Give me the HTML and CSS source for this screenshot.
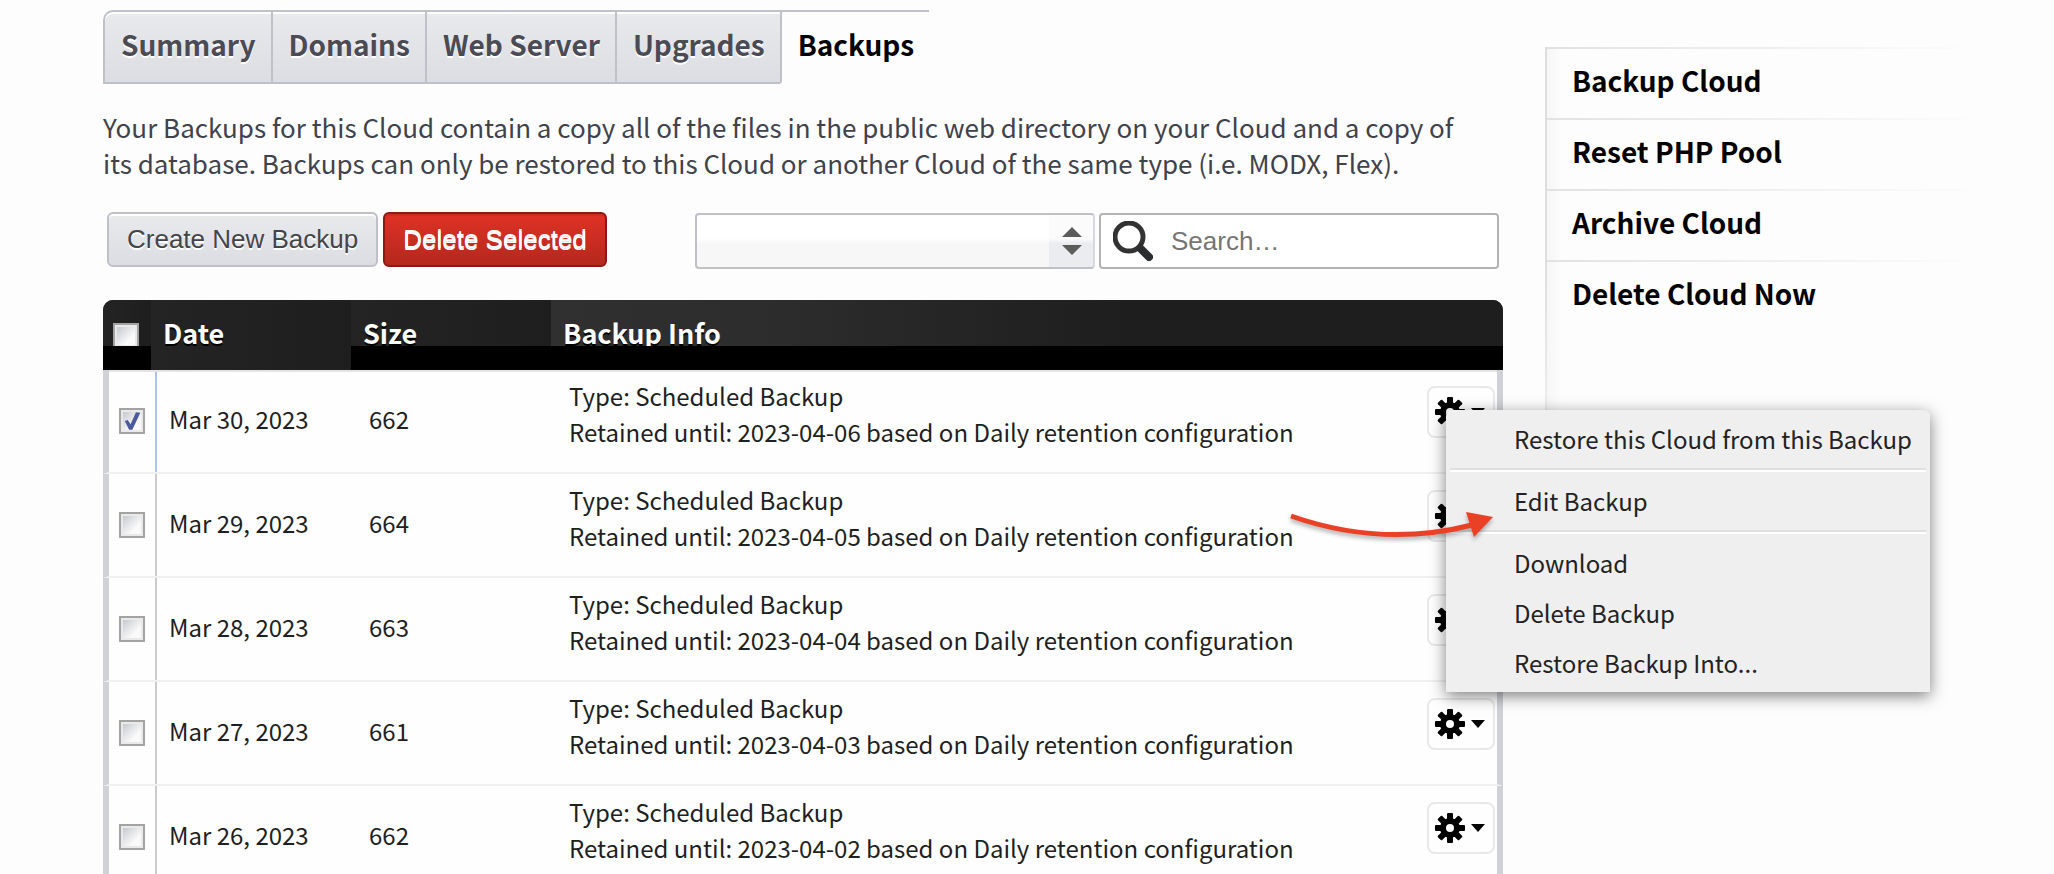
FILE: index.html
```html
<!DOCTYPE html>
<html lang="en">
<head>
    <meta charset="UTF-8">
    <meta name="viewport" content="width=device-width, initial-scale=1.0">
    <title>Backups</title>
    <link rel="stylesheet" href="styles.css">
</head>
<body>
    <!-- shared icons -->
    <svg class="icon-defs" aria-hidden="true">
        <symbol id="gear" viewBox="-15 -15 30 30">
            <g fill="#000">
                <rect x="-3" y="-15" width="6" height="30" rx="1"/>
                <rect x="-3" y="-15" width="6" height="30" rx="1" transform="rotate(45)"/>
                <rect x="-3" y="-15" width="6" height="30" rx="1" transform="rotate(90)"/>
                <rect x="-3" y="-15" width="6" height="30" rx="1" transform="rotate(135)"/>
                <circle r="10"/>
            </g>
            <circle r="4" fill="#fff"/>
        </symbol>
        <symbol id="caret" viewBox="0 0 14 8">
            <path d="M0 0h14L7 8z" fill="#000"/>
        </symbol>
    </svg>

    <div class="page">
        <main class="main">
            <nav class="tabs">
                <a href="#summary" class="tab">Summary</a>
                <a href="#domains" class="tab">Domains</a>
                <a href="#web-server" class="tab">Web Server</a>
                <a href="#upgrades" class="tab">Upgrades</a>
                <a href="#backups" class="tab active">Backups</a>
            </nav>

            <p class="intro">Your Backups for this Cloud contain a copy all of the files in the public web directory on your Cloud and a copy of its database. Backups can only be restored to this Cloud or another Cloud of the same type (i.e. MODX, Flex).</p>

            <div class="toolbar">
                <button type="button" class="button">Create New Backup</button>
                <button type="button" class="button danger">Delete Selected</button>
                <div class="filters">
                    <div class="select-box">
                        <select aria-label="Filter backups">
                            <option></option>
                        </select>
                        <svg class="select-arrows" width="20" height="28" viewBox="0 0 20 28" aria-hidden="true">
                            <path d="M10 0l10 10H0zM0 18h20L10 28z" fill="#5c5c5c"/>
                        </svg>
                    </div>
                    <label class="search-box">
                        <svg width="40" height="40" viewBox="0 0 40 40" aria-hidden="true">
                            <circle cx="16" cy="16" r="14" fill="none" stroke="#333" stroke-width="5"/>
                            <path d="M25 25l3 3" stroke="#333" stroke-width="5"/>
                            <path d="M28 28l8 8" stroke="#2b2d2e" stroke-width="8" stroke-linecap="round"/>
                        </svg>
                        <input type="text" placeholder="Search…" aria-label="Search">
                    </label>
                </div>
            </div>

            <table class="backups">
                <colgroup>
                    <col class="col-check">
                    <col class="col-date">
                    <col class="col-size">
                    <col>
                    <col class="col-actions">
                </colgroup>
                <thead>
                    <tr>
                        <th class="check"><div class="head"><input type="checkbox" class="checkbox" aria-label="Select all"></div></th>
                        <th class="date"><div class="head">Date</div></th>
                        <th class="size"><div class="head">Size</div></th>
                        <th class="info" colspan="2"><div class="head">Backup Info</div></th>
                    </tr>
                </thead>
                <tbody>
                    <tr class="selected">
                        <td class="check"><input type="checkbox" class="checkbox" checked aria-label="Select Mar 30, 2023"></td>
                        <td class="date">Mar 30, 2023</td>
                        <td class="size">662</td>
                        <td class="info">Type: Scheduled Backup<br>Retained until: 2023-04-06 based on Daily retention configuration</td>
                        <td class="actions">
                            <div class="action-wrap">
                                <button type="button" class="gear-button" aria-label="Actions"><svg class="gear"><use href="#gear"/></svg><svg class="caret"><use href="#caret"/></svg></button>
                                <div class="menu">
                                    <a href="#restore">Restore this Cloud from this Backup</a>
                                    <hr>
                                    <a href="#edit">Edit Backup</a>
                                    <hr>
                                    <a href="#download">Download</a>
                                    <a href="#delete">Delete Backup</a>
                                    <a href="#restore-into">Restore Backup Into...</a>
                                </div>
                                <svg class="arrow" width="220" height="50" viewBox="0 0 220 50" aria-hidden="true">
                                    <path d="M6 11Q97 43 187 20" fill="none" stroke="#ea4025" stroke-width="5"/>
                                    <path d="M181 7l27 5-19 20z" fill="#ea4025"/>
                                </svg>
                            </div>
                        </td>
                    </tr>
                    <tr>
                        <td class="check"><input type="checkbox" class="checkbox" aria-label="Select Mar 29, 2023"></td>
                        <td class="date">Mar 29, 2023</td>
                        <td class="size">664</td>
                        <td class="info">Type: Scheduled Backup<br>Retained until: 2023-04-05 based on Daily retention configuration</td>
                        <td class="actions"><button type="button" class="gear-button" aria-label="Actions"><svg class="gear"><use href="#gear"/></svg><svg class="caret"><use href="#caret"/></svg></button></td>
                    </tr>
                    <tr>
                        <td class="check"><input type="checkbox" class="checkbox" aria-label="Select Mar 28, 2023"></td>
                        <td class="date">Mar 28, 2023</td>
                        <td class="size">663</td>
                        <td class="info">Type: Scheduled Backup<br>Retained until: 2023-04-04 based on Daily retention configuration</td>
                        <td class="actions"><button type="button" class="gear-button" aria-label="Actions"><svg class="gear"><use href="#gear"/></svg><svg class="caret"><use href="#caret"/></svg></button></td>
                    </tr>
                    <tr>
                        <td class="check"><input type="checkbox" class="checkbox" aria-label="Select Mar 27, 2023"></td>
                        <td class="date">Mar 27, 2023</td>
                        <td class="size">661</td>
                        <td class="info">Type: Scheduled Backup<br>Retained until: 2023-04-03 based on Daily retention configuration</td>
                        <td class="actions"><button type="button" class="gear-button" aria-label="Actions"><svg class="gear"><use href="#gear"/></svg><svg class="caret"><use href="#caret"/></svg></button></td>
                    </tr>
                    <tr>
                        <td class="check"><input type="checkbox" class="checkbox" aria-label="Select Mar 26, 2023"></td>
                        <td class="date">Mar 26, 2023</td>
                        <td class="size">662</td>
                        <td class="info">Type: Scheduled Backup<br>Retained until: 2023-04-02 based on Daily retention configuration</td>
                        <td class="actions"><button type="button" class="gear-button" aria-label="Actions"><svg class="gear"><use href="#gear"/></svg><svg class="caret"><use href="#caret"/></svg></button></td>
                    </tr>
                </tbody>
            </table>
        </main>

        <aside class="sidebar">
            <a href="#backup-cloud">Backup Cloud</a>
            <a href="#reset-php">Reset PHP Pool</a>
            <a href="#archive">Archive Cloud</a>
            <a href="#delete-cloud">Delete Cloud Now</a>
        </aside>
    </div>
</body>
</html>
```
FILE: styles.css
```css
* {
    box-sizing: border-box;
}
body {
    margin: 0;
    font-family: "Noto Sans CJK SC", "Noto Sans", sans-serif;
    font-size: 24px;
    line-height: 36px;
    color: #1d1f22;
    background-color: #fdfdfd;
}
a {
    text-decoration: none;
}
.icon-defs {
    display: none;
}
.page {
    display: grid;
    grid-template-columns: minmax(0, 1fr) 440px;
    gap: 42px;
    align-items: start;
    padding: 10px 69px 0 103px;
}

/* Tabs */
.tabs {
    display: flex;
}
.tab {
    height: 74px;
    padding: 14px 15px 0 16px;
    border: 2px solid #bfc0c8;
    border-right: none;
    font-size: 28px;
    font-weight: bold;
    color: #4a4b54;
    text-shadow: 0 2px 0 #fff;
    background: linear-gradient(#e9eaec, #dcdde2);
    box-shadow: inset 0 2px 0 #fff;
}
.tab:first-child {
    border-top-left-radius: 10px;
}
.tab.active {
    color: #000;
    text-shadow: none;
    background: none;
    box-shadow: none;
    border-bottom-color: transparent;
}

.intro {
    margin: 25px 0 0;
    padding-right: 24px;
    font-size: 26px;
    color: #40424b;
}

/* Toolbar */
.toolbar {
    display: flex;
    gap: 5px;
    margin: 31px 4px 0;
}
.button {
    height: 55px;
    padding: 0 18px;
    border: 2px solid #bfc0c8;
    border-radius: 6px;
    font-family: "Liberation Sans", Arial, sans-serif;
    font-size: 26px;
    color: #44454a;
    text-shadow: 0 2px 0 #fff;
    background: linear-gradient(#e9eaec, #dcdde2);
    box-shadow: inset 0 2px 0 #fff;
    cursor: pointer;
}
.button.danger {
    color: #fff;
    border-color: #8d1a12;
    background: linear-gradient(#df3225, #b4281d);
    box-shadow: inset 0 2px 0 #cf2c20;
}
.filters {
    display: flex;
    gap: 4px;
    margin-left: auto;
}
.select-box {
    display: grid;
    width: 400px;
    margin-top: 1px;
}
.select-box select,
.select-arrows {
    grid-area: 1 / 1;
}
.select-box select {
    appearance: none;
    height: 56px;
    border: 2px solid #bfc0c8;
    border-right-color: #d8d9de;
    border-radius: 4px;
    background:
        linear-gradient(#fbfbfc 45%, #ebecef 55%) right / 44px 100% no-repeat,
        linear-gradient(#fff 45%, #f7f7f7 55%);
}
.select-arrows {
    place-self: center end;
    margin-right: 13px;
    pointer-events: none;
}
.search-box {
    display: flex;
    align-items: center;
    gap: 16px;
    width: 400px;
    height: 56px;
    margin-top: 1px;
    padding: 0 12px;
    border: 2px solid #b3b3b3;
    border-radius: 4px;
    background-color: #fff;
}
.search-box svg {
    flex: none;
}
.search-box input {
    flex: 1;
    min-width: 0;
    border: none;
    outline: none;
    background: none;
    font-family: "Liberation Sans", Arial, sans-serif;
    font-size: 26px;
}
.search-box input::placeholder {
    color: #757575;
}

/* Backups table */
.backups {
    width: 100%;
    margin-top: 31px;
    table-layout: fixed;
    border-spacing: 0;
}
.col-check {
    width: 48px;
}
.col-date,
.col-size {
    width: 200px;
}
.col-actions {
    width: 76px;
}
.backups th {
    height: 70px;
    padding: 0;
    vertical-align: top;
    text-align: left;
    font-size: 27px;
    color: #fff;
    text-shadow: 0 2px 0 #000;
    background-color: #000;
}
.head {
    height: 46px;
    padding: 15px 12px 0;
    overflow: hidden;
    background: linear-gradient(to right, #242424, #1e1e1e);
}
th.check .head {
    padding: 23px 10px 0;
    border-top-left-radius: 10px;
}
th.date .head {
    height: 70px;
}
th.info .head {
    border-top-right-radius: 10px;
    background: linear-gradient(to right, #303030, #2c2c2c 25%, #1e1e1e 60%);
}
.backups th:first-child {
    border-top-left-radius: 10px;
}
.backups th:last-child {
    border-top-right-radius: 10px;
}
.backups td {
    height: 104px;
    padding: 0;
    border-bottom: 2px solid #f0f0f0;
    background-color: #fefefe;
}
.backups tbody tr:first-child td {
    box-shadow: inset 0 2px 0 #e4e4e6;
}
.backups td.check {
    padding-left: 10px;
    border-left: 6px solid #d0d1d7;
}
.backups td.date {
    padding: 0 0 4px 18px;
    background: linear-gradient(#ccc, #ccc) 4px 0 / 2px 100% no-repeat #fefefe;
}
.backups .selected td.date {
    background-image: linear-gradient(#a9c5ef, #a9c5ef);
}
.backups td.size {
    padding: 0 0 4px 18px;
}
.backups td.info {
    padding: 8px 0 0 18px;
    vertical-align: top;
    white-space: nowrap;
}
.backups td.actions {
    padding-top: 16px;
    vertical-align: top;
    border-right: 6px solid #d0d1d7;
}
.checkbox {
    appearance: none;
    display: block;
    width: 26px;
    height: 26px;
    margin: 0;
    padding: 2px;
    border: 2px solid #a3a3a3;
    background:
        linear-gradient(135deg, #c6c9d0, #fafafa 70%) content-box,
        #e9e9e9;
}
.checkbox:checked::before {
    content: "";
    display: block;
    width: 18px;
    height: 18px;
    background-color: #4a5a9c;
    clip-path: polygon(10% 50%, 26% 44%, 42% 68%, 72% 2%, 96% 4%, 52% 98%, 34% 98%);
}

/* Row actions */
.action-wrap {
    position: relative;
}
.gear-button {
    display: flex;
    align-items: center;
    gap: 6px;
    width: 68px;
    height: 52px;
    padding: 0 6px;
    border: 2px solid #e9e9e9;
    border-radius: 8px;
    background-color: #fefefe;
    cursor: pointer;
}
.gear {
    width: 30px;
    height: 30px;
}
.caret {
    width: 14px;
    height: 8px;
}
.menu {
    position: absolute;
    z-index: 1;
    top: 24px;
    left: 19px;
    width: 484px;
    padding: 4px;
    border-radius: 6px 6px 0 0;
    background-color: #efefef;
    box-shadow: 0 4px 16px rgba(0, 0, 0, 0.5);
}
.menu a {
    display: block;
    padding: 7px 0 7px 64px;
    white-space: nowrap;
    color: #222;
}
.menu hr {
    height: 4px;
    margin: 4px 0;
    border: none;
    background: linear-gradient(#dfdfdf 50%, #fff 50%);
}
.arrow {
    position: absolute;
    z-index: 2;
    top: 119px;
    left: -142px;
    filter: drop-shadow(0 3px 2px rgba(0, 0, 0, 0.3));
}

/* Sidebar */
.sidebar {
    margin-top: 37px;
    padding: 0 0 120px 2px;
    background:
        linear-gradient(#dedede, #dedede 50%, #f2f2f2) left / 2px 100% no-repeat,
        linear-gradient(to right, #f5f5f5, #fdfdfd 16px);
}
.sidebar a {
    display: block;
    height: 71px;
    padding: 15px 0 0 25px;
    font-size: 28px;
    font-weight: bold;
    color: #000;
    background: linear-gradient(to right, #e2e2e2, #fdfdfd) top / 100% 2px no-repeat;
}
.sidebar a:last-child {
    height: 90px;
}
```
